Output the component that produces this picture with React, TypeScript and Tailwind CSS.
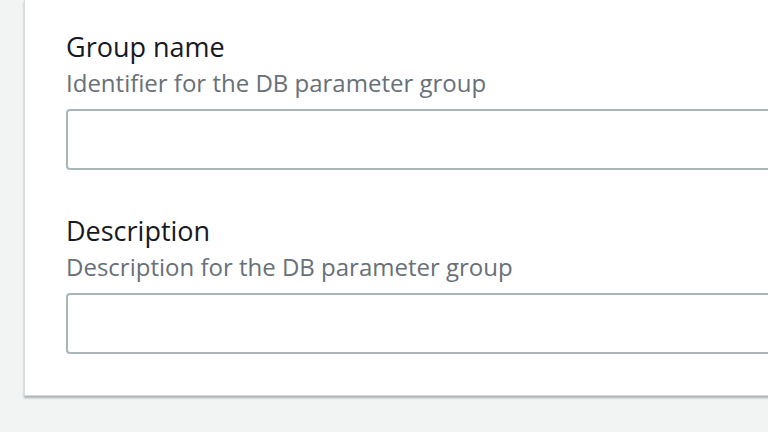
import React from 'react';

const Field = ({ label, hint }: { label: string; hint: string }) => (
  <div className="flex flex-col">
    <label className="text-[27px] leading-[34px] text-[#16191f]">{label}</label>
    <span className="mt-[4px] text-[24px] leading-[30px] text-[#687078]">{hint}</span>
    <input
      type="text"
      className="mt-[11px] h-[61px] w-[760px] rounded-[4px] border-2 border-[#aab7b8] bg-white outline-none"
    />
  </div>
);

export default function App() {
  return (
    <div
      className="h-[432px] w-[768px] overflow-hidden bg-[#f2f3f3] pl-[24px]"
      style={{ fontFamily: '"Open Sans", "Noto Sans", sans-serif' }}
    >
      <div className="flex h-[396px] w-[800px] flex-col gap-[44px] border-l border-b border-[#d5dbdb] bg-white pl-[41px] pt-[30px] shadow-[0_2px_2px_rgba(0,28,36,0.3)]">
        <Field label="Group name" hint="Identifier for the DB parameter group" />
        <Field label="Description" hint="Description for the DB parameter group" />
      </div>
    </div>
  );
}
